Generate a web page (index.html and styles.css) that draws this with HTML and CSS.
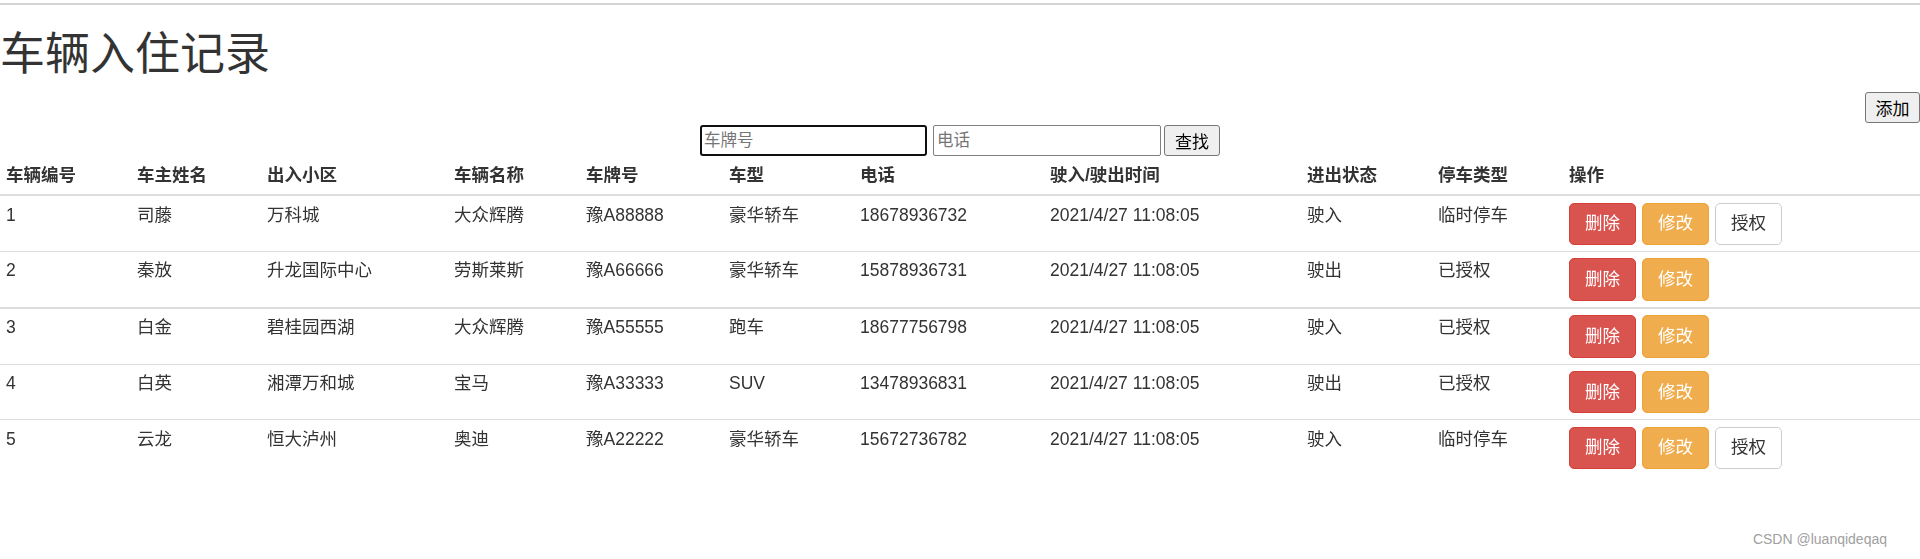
FILE: index.html
```html
<!DOCTYPE html>
<html lang="zh-CN">
<head>
    <meta charset="UTF-8">
    <meta name="viewport" content="width=device-width, initial-scale=1.0">
    <title>车辆入住记录</title>
    <link rel="stylesheet" href="styles.css">
</head>
<body>
    <div class="topline"></div>
    <h1 class="title">车辆入住记录</h1>

    <div class="add-row">
        <button class="plain-btn add-btn" type="button">添加</button>
    </div>

    <form class="search">
        <input class="search-input plate is-focused" type="text" placeholder="车牌号" autofocus>
        <input class="search-input phone" type="text" placeholder="电话">
        <button class="plain-btn find-btn" type="button">查找</button>
    </form>

    <table class="records">
        <colgroup>
            <col class="w-131">
            <col class="w-130">
            <col class="w-187">
            <col class="w-132">
            <col class="w-143">
            <col class="w-131">
            <col class="w-190">
            <col class="w-257">
            <col class="w-131">
            <col class="w-131">
            <col>
        </colgroup>
        <thead>
            <tr>
                <th>车辆编号</th>
                <th>车主姓名</th>
                <th>出入小区</th>
                <th>车辆名称</th>
                <th>车牌号</th>
                <th>车型</th>
                <th>电话</th>
                <th>驶入/驶出时间</th>
                <th>进出状态</th>
                <th>停车类型</th>
                <th>操作</th>
            </tr>
        </thead>
        <tbody>
            <tr>
                <td>1</td>
                <td>司藤</td>
                <td>万科城</td>
                <td>大众辉腾</td>
                <td>豫A88888</td>
                <td>豪华轿车</td>
                <td>18678936732</td>
                <td>2021/4/27 11:08:05</td>
                <td>驶入</td>
                <td>临时停车</td>
                <td>
                    <div class="actions">
                        <button class="btn btn-danger" type="button">删除</button>
                        <button class="btn btn-warning" type="button">修改</button>
                        <button class="btn btn-default" type="button">授权</button>
                    </div>
                </td>
            </tr>
            <tr>
                <td>2</td>
                <td>秦放</td>
                <td>升龙国际中心</td>
                <td>劳斯莱斯</td>
                <td>豫A66666</td>
                <td>豪华轿车</td>
                <td>15878936731</td>
                <td>2021/4/27 11:08:05</td>
                <td>驶出</td>
                <td>已授权</td>
                <td>
                    <div class="actions">
                        <button class="btn btn-danger" type="button">删除</button>
                        <button class="btn btn-warning" type="button">修改</button>
                    </div>
                </td>
            </tr>
            <tr class="thick-top">
                <td>3</td>
                <td>白金</td>
                <td>碧桂园西湖</td>
                <td>大众辉腾</td>
                <td>豫A55555</td>
                <td>跑车</td>
                <td>18677756798</td>
                <td>2021/4/27 11:08:05</td>
                <td>驶入</td>
                <td>已授权</td>
                <td>
                    <div class="actions">
                        <button class="btn btn-danger" type="button">删除</button>
                        <button class="btn btn-warning" type="button">修改</button>
                    </div>
                </td>
            </tr>
            <tr>
                <td>4</td>
                <td>白英</td>
                <td>湘潭万和城</td>
                <td>宝马</td>
                <td>豫A33333</td>
                <td>SUV</td>
                <td>13478936831</td>
                <td>2021/4/27 11:08:05</td>
                <td>驶出</td>
                <td>已授权</td>
                <td>
                    <div class="actions">
                        <button class="btn btn-danger" type="button">删除</button>
                        <button class="btn btn-warning" type="button">修改</button>
                    </div>
                </td>
            </tr>
            <tr>
                <td>5</td>
                <td>云龙</td>
                <td>恒大泸州</td>
                <td>奥迪</td>
                <td>豫A22222</td>
                <td>豪华轿车</td>
                <td>15672736782</td>
                <td>2021/4/27 11:08:05</td>
                <td>驶入</td>
                <td>临时停车</td>
                <td>
                    <div class="actions">
                        <button class="btn btn-danger" type="button">删除</button>
                        <button class="btn btn-warning" type="button">修改</button>
                        <button class="btn btn-default" type="button">授权</button>
                    </div>
                </td>
            </tr>
        </tbody>
    </table>

    <div class="watermark">CSDN @luanqideqaq</div>
</body>
</html>
```

FILE: styles.css
```css
html, body {
    margin: 0;
    padding: 0;
}
body {
    font-family: "Liberation Sans", Arial, "Noto Sans CJK SC", sans-serif;
    font-size: 17.5px;
    line-height: 1.42857;
    color: #333333;
    background-color: #ffffff;
    min-height: 559px;
}
.topline {
    margin-top: 3px;
    border-top: 2px solid #d3d3d3;
}
.title {
    margin: 25px 0 12px 0;
    font-size: 45px;
    font-weight: 400;
    line-height: 1.1;
    color: #333333;
}
.add-row {
    display: flex;
    justify-content: flex-end;
    height: 31px;
    margin-bottom: 2px;
}
.plain-btn {
    box-sizing: border-box;
    height: 31px;
    padding: 0 8px;
    font-family: "Liberation Sans", Arial, "Noto Sans CJK SC", sans-serif;
    font-size: 17px;
    color: #000000;
    background-color: #efefef;
    border: 1px solid #767676;
    border-radius: 3px;
}
.add-btn {
    width: 55px;
}
.find-btn {
    width: 56px;
}
.search {
    display: flex;
    justify-content: center;
    height: 31px;
    margin: 0 0 1px 0;
}
.search-input {
    box-sizing: border-box;
    width: 227px;
    height: 31px;
    padding: 1px 3px;
    font-family: "Liberation Sans", Arial, "Noto Sans CJK SC", sans-serif;
    font-size: 16.5px;
    color: #000000;
    border: 1px solid #808080;
    border-radius: 2px;
    outline: none;
}
.search-input::placeholder {
    color: #757575;
}
.search-input.plate {
    margin-right: 6px;
}
.search-input.phone {
    width: 228px;
    margin-right: 3px;
}
.search-input.is-focused {
    border: 2px solid #101010;
    border-radius: 3px;
    padding: 0 2px;
}
.records {
    width: 100%;
    table-layout: fixed;
    border-collapse: collapse;
    border-spacing: 0;
}
.w-130 { width: 130px; }
.w-131 { width: 131px; }
.w-132 { width: 132px; }
.w-143 { width: 143px; }
.w-187 { width: 187px; }
.w-190 { width: 190px; }
.w-257 { width: 257px; }
.records th {
    padding: 6.5px 6px;
    text-align: left;
    vertical-align: bottom;
    font-weight: bold;
    border-bottom: 2.5px solid #dddddd;
}
.records td {
    padding: 6.25px 6px 6px 6px;
    vertical-align: top;
    border-top: 1px solid #dddddd;
}
.records tbody tr:first-child td {
    border-top: 0;
}
.records tr.thick-top td {
    border-top: 2px solid #dddddd;
}
.actions {
    display: flex;
    gap: 6px;
}
.btn {
    box-sizing: border-box;
    height: 42.5px;
    padding: 7px 15px;
    font-family: "Liberation Sans", Arial, "Noto Sans CJK SC", sans-serif;
    font-size: 17.5px;
    line-height: 1.42857;
    border: 1.25px solid transparent;
    border-radius: 5px;
    cursor: pointer;
}
.btn-danger {
    color: #ffffff;
    background-color: #d9534f;
    border-color: #d43f3a;
}
.btn-warning {
    color: #ffffff;
    background-color: #f0ad4e;
    border-color: #eea236;
}
.btn-default {
    color: #333333;
    background-color: #ffffff;
    border-color: #cccccc;
}
.watermark {
    position: absolute;
    top: 530px;
    right: 33px;
    font-size: 14px;
    line-height: 18px;
    color: #a0a0a0;
}
```
